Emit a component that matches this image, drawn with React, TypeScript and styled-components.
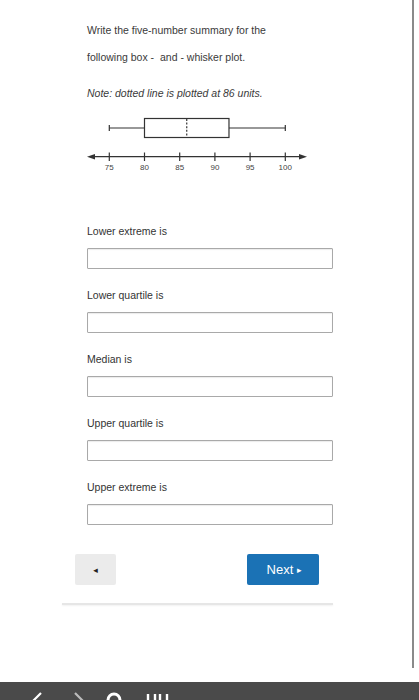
import styled, { createGlobalStyle } from 'styled-components';

const Global = createGlobalStyle`
  html, body {
    margin: 0;
    padding: 0;
    background: #fff;
    font-family: 'Liberation Sans', Arial, sans-serif;
  }
`;

const fields = [
  'Lower extreme is',
  'Lower quartile is',
  'Median is',
  'Upper quartile is',
  'Upper extreme is',
];

const ticks = [75, 80, 85, 90, 95, 100];
const unit = 7.04;
const x0 = 22.3;
const px = (v: number) => x0 + (v - 75) * unit;

const BoxPlot = () => (
  <PlotSvg width={223} height={62} viewBox="0 0 223 62">
    <g stroke="#333" strokeWidth={1.2} fill="none">
      <line x1={px(75)} y1={16} x2={px(80)} y2={16} />
      <line x1={px(92)} y1={16} x2={px(100)} y2={16} />
      <line x1={px(75)} y1={13} x2={px(75)} y2={19} />
      <line x1={px(100)} y1={13} x2={px(100)} y2={19} />
      <rect x={px(80)} y={6.5} width={px(92) - px(80)} height={19} />
      <line x1={px(86)} y1={7} x2={px(86)} y2={25} strokeDasharray="2 1.6" />
      <line x1={5} y1={44.7} x2={215} y2={44.7} />
      {ticks.map(t => (
        <line key={t} x1={px(t)} y1={40.5} x2={px(t)} y2={49} />
      ))}
    </g>
    <polygon points="0,44.7 8,42 8,47.4" fill="#333" />
    <polygon points="220,44.7 212,42 212,47.4" fill="#333" />
    {ticks.map(t => (
      <text key={t} x={px(t)} y={58} textAnchor="middle" fontSize={8} fill="#444" fontFamily="'Liberation Sans', Arial, sans-serif">
        {t}
      </text>
    ))}
  </PlotSvg>
);

export default function App() {
  return (
    <>
      <Global />
      <Screen>
        <Main>
          <Content>
            <Question>
              <Prompt>
                Write the five-number summary for the
                <br />
                following box -&nbsp; and - whisker plot.
              </Prompt>
              <Note>Note: dotted line is plotted at 86 units.</Note>
              <BoxPlot />
              <Fields>
                {fields.map(label => (
                  <Field key={label}>
                    <Label>{label}</Label>
                    <Input type="text" />
                  </Field>
                ))}
              </Fields>
            </Question>
            <Nav>
              <PrevButton aria-label="previous">◂</PrevButton>
              <NextButton>
                Next <Arrow>▸</Arrow>
              </NextButton>
            </Nav>
            <Divider />
          </Content>
        </Main>
        <ScrollLine />
      </Screen>
      <Toolbar>
        <ToolIcon width={14} height={20} viewBox="0 0 14 20" style={{ left: 30 }}>
          <path d="M11 2 L3 10 L11 18" stroke="#fff" strokeWidth={2.2} fill="none" />
        </ToolIcon>
        <ToolIcon width={14} height={20} viewBox="0 0 14 20" style={{ left: 72 }}>
          <path d="M3 2 L11 10 L3 18" stroke="#bbb" strokeWidth={2.2} fill="none" />
        </ToolIcon>
        <ToolIcon width={16} height={20} viewBox="0 0 16 20" style={{ left: 106 }}>
          <circle cx={8} cy={9} r={6} stroke="#fff" strokeWidth={3} fill="none" />
        </ToolIcon>
        <ToolIcon width={24} height={20} viewBox="0 0 24 20" style={{ left: 145 }}>
          <path d="M3 3 L3 16 M10 3 L10 16 M15 3 L15 16 M22 3 L22 16" stroke="#fff" strokeWidth={2.4} fill="none" />
        </ToolIcon>
      </Toolbar>
    </>
  );
}

const Screen = styled.div`
  display: flex;
  height: 682px;
  background: #fff;
`;

const Main = styled.div`
  width: 412px;
`;

const Content = styled.div`
  width: 271px;
  margin-left: 62px;
`;

const Question = styled.div`
  padding: 17px 0 0 25px;
`;

const Prompt = styled.p`
  margin: 0;
  font-size: 10.5px;
  line-height: 27px;
  color: #3a3a3a;
`;

const Note = styled.p`
  margin: 14px 0 0;
  font-size: 10.5px;
  line-height: 16px;
  font-style: italic;
  color: #3a3a3a;
`;

const PlotSvg = styled.svg`
  display: block;
  margin-top: 11px;
`;

const Fields = styled.div`
  display: flex;
  flex-direction: column;
  gap: 19px;
  margin-top: 50px;
`;

const Field = styled.div`
  display: flex;
  flex-direction: column;
`;

const Label = styled.label`
  font-size: 10.5px;
  line-height: 14px;
  color: #333;
  margin-bottom: 10px;
`;

const Input = styled.input`
  box-sizing: border-box;
  width: 246px;
  height: 21px;
  margin: 0;
  border: 1px solid #a9a9a9;
  border-radius: 1px;
  background: #fff;
  box-shadow: inset 0 1px 1px rgba(0, 0, 0, 0.08);
`;

const Nav = styled.div`
  display: flex;
  justify-content: space-between;
  padding: 29px 14px 0 13px;
`;

const PrevButton = styled.button`
  width: 41px;
  height: 31px;
  border: none;
  border-radius: 2px;
  background: #ebebeb;
  color: #222;
  font-size: 9px;
  padding: 0;
  font-family: 'DejaVu Sans', sans-serif;
`;

const NextButton = styled.button`
  width: 72px;
  height: 31px;
  border: none;
  border-radius: 2px;
  background: #1b72b5;
  color: #fff;
  font-size: 13px;
  font-family: 'Liberation Sans', Arial, sans-serif;
  padding: 0 0 0 2px;
`;

const Arrow = styled.span`
  font-size: 9px;
  font-family: 'DejaVu Sans', sans-serif;
  vertical-align: 1px;
`;

const Divider = styled.div`
  margin-top: 18px;
  height: 2px;
  background: #e6e6e6;
  box-shadow: 0 1px 2px rgba(0, 0, 0, 0.06);
`;

const ScrollLine = styled.div`
  width: 2px;
  height: 668px;
  background: #8a8a8a;
`;

const Toolbar = styled.div`
  position: relative;
  height: 18px;
  background: #4a4a4a;
  overflow: hidden;
`;

const ToolIcon = styled.svg`
  position: absolute;
  top: 9px;
`;
